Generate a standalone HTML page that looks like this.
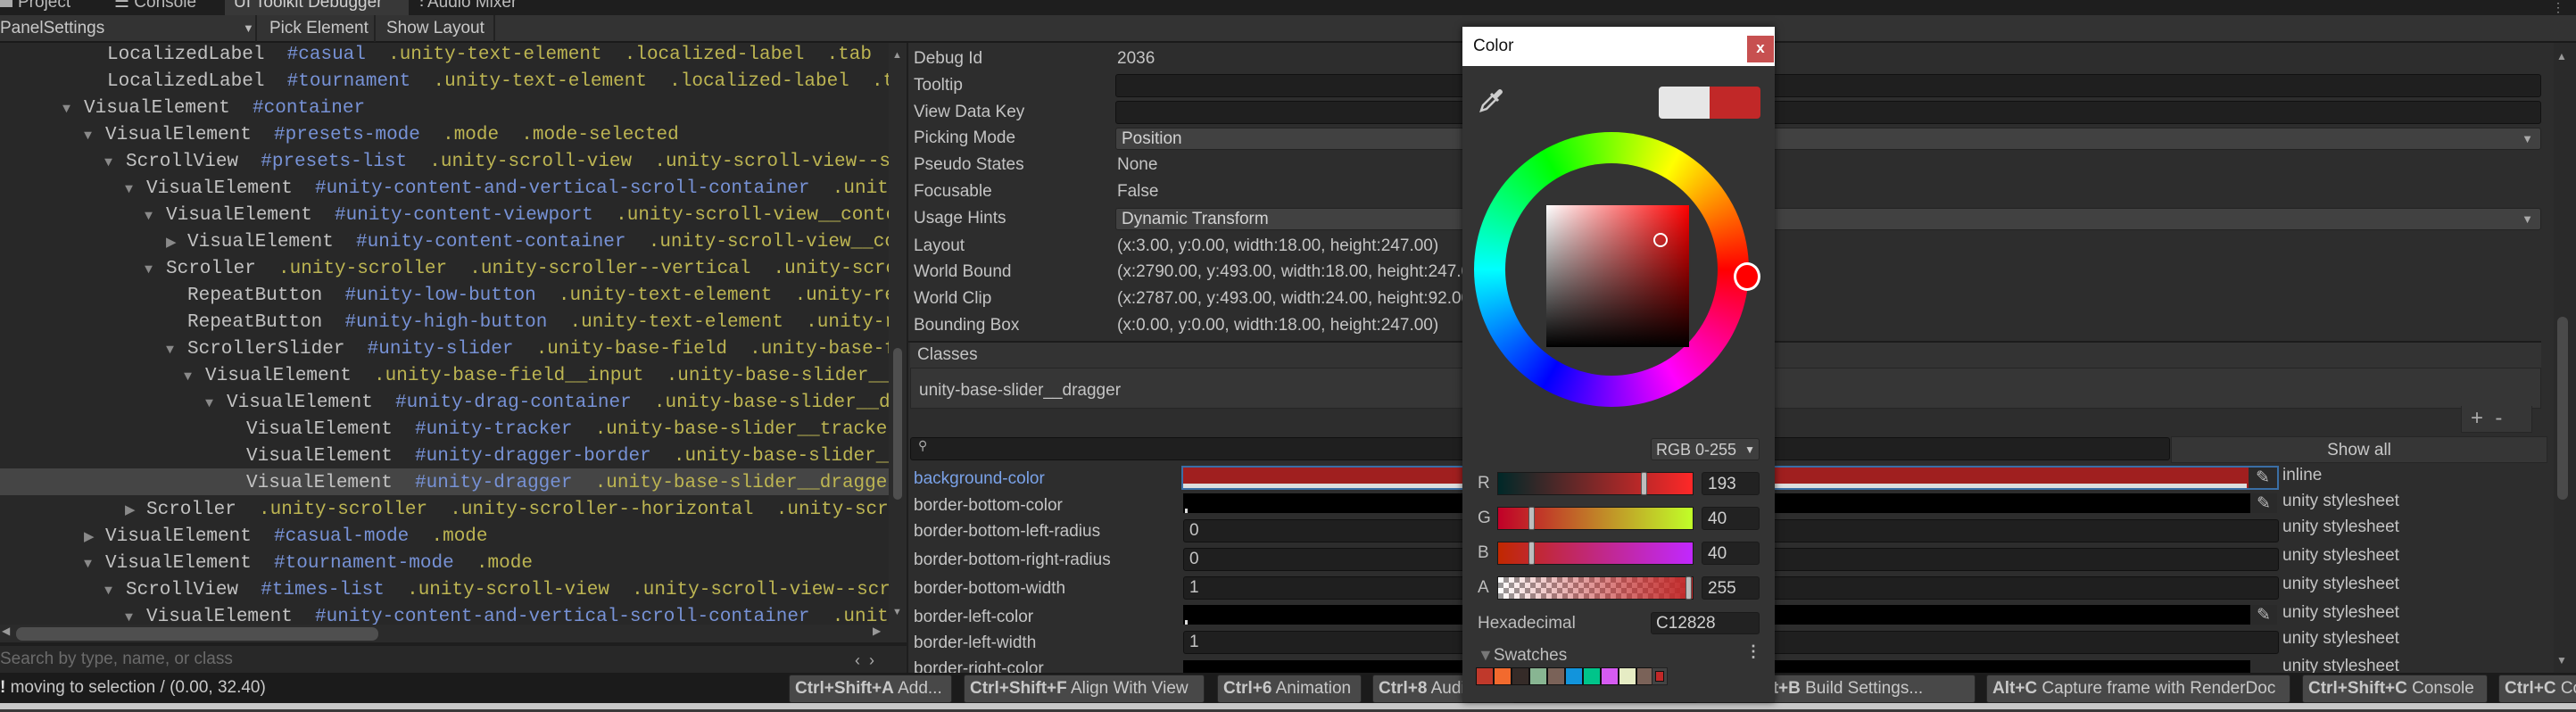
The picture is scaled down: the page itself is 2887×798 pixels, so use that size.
<!DOCTYPE html>
<html><head><meta charset="utf-8">
<style>
*{box-sizing:border-box;margin:0;padding:0}
body{width:2887px;height:798px;overflow:hidden;background:#282828;position:relative;font-family:"Liberation Sans",sans-serif;font-size:19px;color:#c4c4c4}
.a{position:absolute;white-space:nowrap}
.m{font-family:"Liberation Mono",monospace;font-size:21px;line-height:30px;height:30px;white-space:pre}
.n{color:#c2c2c2}.i{color:#7792d6}.c{color:#bdb552}
.tri{color:#8a8a8a;font-size:15px;display:inline-block;width:24px}
.lbl{position:absolute;left:1024px;white-space:nowrap;color:#c4c4c4;line-height:24px}
.fld{position:absolute;background:#1f1f1f;border:1px solid #111;border-radius:3px}
.dd{position:absolute;background:#414141;border:1px solid #232323;border-radius:3px;color:#d2d2d2;padding-left:6px;line-height:24px}
.btn{position:absolute;background:#484848;border:1px solid #252525;border-radius:3px;color:#c8c8c8;line-height:30px;padding:0 6px;white-space:nowrap;font-size:19px}
.sl{position:absolute;left:1678px;width:220px;height:26px;border:1px solid #191919}
.hd{position:absolute;width:7px;height:26px;top:-1px;background:#bdbdbd;border:1px solid #555;border-radius:2px}
.nb{position:absolute;left:1907px;width:65px;height:26px;background:#222;border:1px solid #1a1a1a;border-radius:3px;padding-left:6px;line-height:25px;color:#d0d0d0}
.rl{position:absolute;left:1656px;color:#bdbdbd;line-height:26px}
.sw{position:absolute;top:748px;width:20px;height:20px;border:1px solid #111}
</style></head><body>

<div class="a" style="left:0;top:0;width:2887px;height:17px;background:#1e1e1e"></div>
<div class="a" style="left:252px;top:0;width:206px;height:17px;background:#383838"></div>
<div class="a" style="left:0;top:-8px;font-size:19px;color:#bbb;line-height:22px">
<span style="display:inline-block;width:14px;height:12px;background:#aaa;margin-right:6px"></span>Project</div>
<div class="a" style="left:128px;top:-8px;color:#bbb;line-height:22px">☰ Console</div>
<div class="a" style="left:262px;top:-8px;color:#d0d0d0;line-height:22px">UI Toolkit Debugger</div>
<div class="a" style="left:470px;top:-8px;color:#bbb;line-height:22px">⫶ Audio Mixer</div>
<div class="a" style="left:2860px;top:0;color:#999;font-size:14px">⋮</div>

<div class="a" style="left:0;top:17px;width:2887px;height:30px;background:#333"></div>
<div class="a" style="left:0;top:46px;width:2887px;height:2px;background:#1a1a1a"></div>
<div class="a" style="left:0;top:17px;width:288px;height:30px;border-right:2px solid #222;line-height:30px;color:#c8c8c8">PanelSettings<span style="position:absolute;left:272px;font-size:13px;color:#bbb">▼</span></div>
<div class="a" style="left:290px;top:17px;width:131px;height:30px;border-right:2px solid #222;line-height:30px;padding-left:12px;color:#c8c8c8">Pick Element</div>
<div class="a" style="left:423px;top:17px;width:132px;height:30px;border-right:2px solid #222;line-height:30px;padding-left:10px;color:#c8c8c8">Show Layout</div>

<div class="a" style="left:0;top:48px;width:996px;height:652px;overflow:hidden">
<div class="a" style="left:0;top:477px;width:996px;height:30px;background:#454545"></div>
<div class="a m" style="left:120px;top:-1px"><span class="n">LocalizedLabel</span>  <span class="i">#casual</span>  <span class="c">.unity-text-element  .localized-label  .tab</span></div>
<div class="a m" style="left:120px;top:29px"><span class="n">LocalizedLabel</span>  <span class="i">#tournament</span>  <span class="c">.unity-text-element  .localized-label  .tab</span></div>
<div class="a m" style="left:70px;top:59px"><span class="tri">▼</span><span class="n">VisualElement</span>  <span class="i">#container</span></div>
<div class="a m" style="left:94px;top:89px"><span class="tri">▼</span><span class="n">VisualElement</span>  <span class="i">#presets-mode</span>  <span class="c">.mode  .mode-selected</span></div>
<div class="a m" style="left:117px;top:119px"><span class="tri">▼</span><span class="n">ScrollView</span>  <span class="i">#presets-list</span>  <span class="c">.unity-scroll-view  .unity-scroll-view--scroll</span></div>
<div class="a m" style="left:140px;top:149px"><span class="tri">▼</span><span class="n">VisualElement</span>  <span class="i">#unity-content-and-vertical-scroll-container</span>  <span class="c">.unity</span></div>
<div class="a m" style="left:162px;top:179px"><span class="tri">▼</span><span class="n">VisualElement</span>  <span class="i">#unity-content-viewport</span>  <span class="c">.unity-scroll-view__content</span></div>
<div class="a m" style="left:186px;top:209px"><span class="tri">▶</span><span class="n">VisualElement</span>  <span class="i">#unity-content-container</span>  <span class="c">.unity-scroll-view__content</span></div>
<div class="a m" style="left:162px;top:239px"><span class="tri">▼</span><span class="n">Scroller</span>  <span class="c">.unity-scroller  .unity-scroller--vertical  .unity-scroller</span></div>
<div class="a m" style="left:210px;top:269px"><span class="n">RepeatButton</span>  <span class="i">#unity-low-button</span>  <span class="c">.unity-text-element  .unity-repeat</span></div>
<div class="a m" style="left:210px;top:299px"><span class="n">RepeatButton</span>  <span class="i">#unity-high-button</span>  <span class="c">.unity-text-element  .unity-repeat</span></div>
<div class="a m" style="left:186px;top:329px"><span class="tri">▼</span><span class="n">ScrollerSlider</span>  <span class="i">#unity-slider</span>  <span class="c">.unity-base-field  .unity-base-field</span></div>
<div class="a m" style="left:206px;top:359px"><span class="tri">▼</span><span class="n">VisualElement</span>  <span class="c">.unity-base-field__input  .unity-base-slider__input</span></div>
<div class="a m" style="left:230px;top:389px"><span class="tri">▼</span><span class="n">VisualElement</span>  <span class="i">#unity-drag-container</span>  <span class="c">.unity-base-slider__drag</span></div>
<div class="a m" style="left:276px;top:419px"><span class="n">VisualElement</span>  <span class="i">#unity-tracker</span>  <span class="c">.unity-base-slider__tracker</span></div>
<div class="a m" style="left:276px;top:449px"><span class="n">VisualElement</span>  <span class="i">#unity-dragger-border</span>  <span class="c">.unity-base-slider__drag</span></div>
<div class="a m" style="left:276px;top:479px"><span class="n">VisualElement</span>  <span class="i">#unity-dragger</span>  <span class="c">.unity-base-slider__dragger</span></div>
<div class="a m" style="left:140px;top:509px"><span class="tri">▶</span><span class="n">Scroller</span>  <span class="c">.unity-scroller  .unity-scroller--horizontal  .unity-scroller</span></div>
<div class="a m" style="left:94px;top:539px"><span class="tri">▶</span><span class="n">VisualElement</span>  <span class="i">#casual-mode</span>  <span class="c">.mode</span></div>
<div class="a m" style="left:94px;top:569px"><span class="tri">▼</span><span class="n">VisualElement</span>  <span class="i">#tournament-mode</span>  <span class="c">.mode</span></div>
<div class="a m" style="left:117px;top:599px"><span class="tri">▼</span><span class="n">ScrollView</span>  <span class="i">#times-list</span>  <span class="c">.unity-scroll-view  .unity-scroll-view--scroll</span></div>
<div class="a m" style="left:140px;top:629px"><span class="tri">▼</span><span class="n">VisualElement</span>  <span class="i">#unity-content-and-vertical-scroll-container</span>  <span class="c">.unity</span></div>
</div>
<div class="a" style="left:996px;top:48px;width:20px;height:672px;background:#2b2b2b"></div>
<div class="a" style="left:1001px;top:390px;width:10px;height:170px;background:#4f4f4f;border-radius:5px"></div>
<div class="a" style="left:1000px;top:56px;font-size:11px;color:#999">▲</div>
<div class="a" style="left:1000px;top:680px;font-size:11px;color:#999">▼</div>
<div class="a" style="left:0;top:700px;width:996px;height:20px;background:#2b2b2b"></div>
<div class="a" style="left:18px;top:703px;width:406px;height:15px;background:#4f4f4f;border-radius:7px"></div>
<div class="a" style="left:2px;top:700px;font-size:12px;color:#999">◀</div>
<div class="a" style="left:978px;top:700px;font-size:12px;color:#999">▶</div>
<div class="a" style="left:0;top:720px;width:1016px;height:4px;background:#1e1e1e"></div>
<div class="a" style="left:0;top:724px;width:1016px;height:30px;background:#282828"></div>
<div class="a" style="left:0;top:727px;color:#6b6b6b;line-height:24px">Search by type, name, or class</div>
<div class="a" style="left:950px;top:726px;width:62px;height:28px;color:#aaa;line-height:28px;font-size:18px;padding-left:8px">‹ &nbsp;›</div>

<div class="a" style="left:1016px;top:48px;width:2px;height:706px;background:#1e1e1e"></div>
<div class="a" style="left:1018px;top:48px;width:1844px;height:706px;background:#2d2d2d"></div>
<div class="lbl" style="top:54px">Debug Id</div><div class="a" style="left:1252px;top:54px;line-height:24px">2036</div>
<div class="lbl" style="top:84px">Tooltip</div><div class="fld" style="left:1250px;top:83px;width:1598px;height:26px"></div>
<div class="lbl" style="top:114px">View Data Key</div><div class="fld" style="left:1250px;top:113px;width:1598px;height:26px"></div>
<div class="lbl" style="top:143px">Picking Mode</div><div class="dd" style="left:1250px;top:143px;width:1598px;height:25px">Position<span style="position:absolute;right:8px;font-size:13px;color:#aaa">▼</span></div>
<div class="lbl" style="top:173px">Pseudo States</div><div class="a" style="left:1252px;top:173px;line-height:24px">None</div>
<div class="lbl" style="top:203px">Focusable</div><div class="a" style="left:1252px;top:203px;line-height:24px">False</div>
<div class="lbl" style="top:233px">Usage Hints</div><div class="dd" style="left:1250px;top:233px;width:1598px;height:25px">Dynamic Transform<span style="position:absolute;right:8px;font-size:13px;color:#aaa">▼</span></div>
<div class="lbl" style="top:264px">Layout</div><div class="a" style="left:1252px;top:264px;line-height:24px">(x:3.00, y:0.00, width:18.00, height:247.00)</div>
<div class="lbl" style="top:293px">World Bound</div><div class="a" style="left:1252px;top:293px;line-height:24px">(x:2790.00, y:493.00, width:18.00, height:247.00)</div>
<div class="lbl" style="top:323px">World Clip</div><div class="a" style="left:1252px;top:323px;line-height:24px">(x:2787.00, y:493.00, width:24.00, height:92.00)</div>
<div class="lbl" style="top:353px">Bounding Box</div><div class="a" style="left:1252px;top:353px;line-height:24px">(x:0.00, y:0.00, width:18.00, height:247.00)</div>

<div class="a" style="left:1018px;top:382px;width:1830px;height:2px;background:#1c1c1c"></div>
<div class="a" style="left:1020px;top:384px;width:1828px;height:28px;background:#333"></div>
<div class="a" style="left:1028px;top:385px;line-height:26px;color:#c4c4c4">Classes</div>
<div class="a" style="left:1020px;top:412px;width:1828px;height:46px;background:#363636;border:1px solid #262626"></div>
<div class="a" style="left:1030px;top:425px;line-height:26px;color:#c4c4c4">unity-base-slider__dragger</div>
<div class="a" style="left:2758px;top:455px;width:80px;height:30px;background:#363636;border:1px solid #262626;border-top:none;color:#aaa;font-size:24px;line-height:28px;padding-left:10px">+ &nbsp;-</div>
<div class="fld" style="left:1020px;top:490px;width:1412px;height:26px"><span style="position:absolute;left:8px;top:0;font-size:14px;color:#aaa">⚲</span></div>
<div class="a" style="left:2433px;top:489px;width:422px;height:30px;background:#363636;border:1px solid #262626;text-align:center;line-height:30px;color:#c8c8c8">Show all</div>

<div class="a" style="left:1024px;top:524px;line-height:26px;color:#7aa2e8">background-color</div>
<div class="a" style="left:1324px;top:522px;width:1230px;height:27px;border:2px solid #3a6ea5;background:#a01f1f"><div style="position:absolute;left:0;bottom:0;width:1192px;height:5px;background:#ddd"></div><div style="position:absolute;right:0;top:0;width:32px;height:23px;background:#2a2a2a;color:#bbb;text-align:center">✎</div></div>
<div class="a" style="left:2558px;top:520px;line-height:26px">inline</div>

<div class="lbl" style="top:555px">border-bottom-color</div>
<div class="a" style="left:1326px;top:553px;width:1196px;height:22px;background:#000"><div style="position:absolute;left:2px;bottom:0;width:3px;height:5px;background:#ddd"></div></div>
<div class="a" style="left:2522px;top:553px;width:30px;height:22px;background:#2a2a2a;color:#bbb;text-align:center">✎</div>
<div class="a" style="left:2558px;top:549px;line-height:26px">unity stylesheet</div>

<div class="lbl" style="top:584px">border-bottom-left-radius</div>
<div class="fld" style="left:1326px;top:582px;width:1228px;height:26px;padding-left:6px;line-height:24px">0</div>
<div class="a" style="left:2558px;top:578px;line-height:26px">unity stylesheet</div>

<div class="lbl" style="top:616px">border-bottom-right-radius</div>
<div class="fld" style="left:1326px;top:614px;width:1228px;height:26px;padding-left:6px;line-height:24px">0</div>
<div class="a" style="left:2558px;top:610px;line-height:26px">unity stylesheet</div>

<div class="lbl" style="top:648px">border-bottom-width</div>
<div class="fld" style="left:1326px;top:646px;width:1228px;height:26px;padding-left:6px;line-height:24px">1</div>
<div class="a" style="left:2558px;top:642px;line-height:26px">unity stylesheet</div>

<div class="lbl" style="top:680px">border-left-color</div>
<div class="a" style="left:1326px;top:678px;width:1196px;height:22px;background:#000"><div style="position:absolute;left:2px;bottom:0;width:3px;height:5px;background:#ddd"></div></div>
<div class="a" style="left:2522px;top:678px;width:30px;height:22px;background:#2a2a2a;color:#bbb;text-align:center">✎</div>
<div class="a" style="left:2558px;top:674px;line-height:26px">unity stylesheet</div>

<div class="lbl" style="top:709px">border-left-width</div>
<div class="fld" style="left:1326px;top:707px;width:1228px;height:26px;padding-left:6px;line-height:24px">1</div>
<div class="a" style="left:2558px;top:703px;line-height:26px">unity stylesheet</div>

<div class="a" style="left:1018px;top:738px;width:1844px;height:16px;overflow:hidden">
<div class="lbl" style="left:6px;top:0">border-right-color</div>
<div class="a" style="left:308px;top:2px;width:1196px;height:22px;background:#000"></div>
<div class="a" style="left:1540px;top:-4px;line-height:26px">unity stylesheet</div></div>

<div class="a" style="left:2862px;top:48px;width:25px;height:706px;background:#2a2a2a"></div>
<div class="a" style="left:2866px;top:355px;width:12px;height:205px;background:#4a4a4a;border-radius:6px"></div>
<div class="a" style="left:2865px;top:56px;font-size:12px;color:#999">▲</div>
<div class="a" style="left:2865px;top:733px;font-size:12px;color:#999">▼</div>

<div class="a" style="left:0;top:754px;width:2887px;height:34px;background:#1b1b1b"></div>
<div class="a" style="left:0;top:758px;line-height:26px;color:#c8c8c8"><b style="color:#ddd">!</b> moving to selection / (0.00, 32.40)</div>
<div class="btn" style="left:884px;top:756px;width:183px"><b>Ctrl+Shift+A</b> Add...</div>
<div class="btn" style="left:1080px;top:756px;width:270px"><b>Ctrl+Shift+F</b> Align With View</div>
<div class="btn" style="left:1364px;top:756px;width:162px"><b>Ctrl+6</b> Animation</div>
<div class="btn" style="left:1538px;top:756px;width:160px"><b>Ctrl+8</b> Audio Mixer</div>
<div class="btn" style="left:1900px;top:756px;width:314px"><b>Ctrl+Shift+B</b> Build Settings...</div>
<div class="btn" style="left:2226px;top:756px;width:341px"><b>Alt+C</b> Capture frame with RenderDoc</div>
<div class="btn" style="left:2580px;top:756px;width:208px"><b>Ctrl+Shift+C</b> Console</div>
<div class="btn" style="left:2800px;top:756px;width:120px"><b>Ctrl+C</b> Copy</div>
<div class="a" style="left:0;top:788px;width:2887px;height:10px;background:#c8c8c8"></div>
<div class="a" style="left:0;top:795px;width:2887px;height:3px;background:#3a3a3a"></div>

<div class="a" style="left:1639px;top:30px;width:350px;height:757px;background:#333;box-shadow:0 0 8px rgba(0,0,0,.6)"></div>
<div class="a" style="left:1639px;top:30px;width:350px;height:44px;background:#fff"></div>
<div class="a" style="left:1651px;top:40px;color:#111;line-height:24px">Color</div>
<div class="a" style="left:1958px;top:40px;width:30px;height:30px;background:#c75050;color:#fff;font-weight:bold;text-align:center;line-height:28px;font-size:17px">x</div>
<svg class="a" style="left:1656px;top:96px" width="30" height="32" viewBox="0 0 30 32"><path d="M4 28 L6 22 L17 11 L21 15 L10 26 Z" fill="none" stroke="#ccc" stroke-width="2.5"/><path d="M17 11 L23 5 Q25 3 27 5 Q29 7 27 9 L21 15" fill="#ccc"/><path d="M15 9 L23 17" stroke="#ccc" stroke-width="3"/></svg>
<div class="a" style="left:1859px;top:97px;width:57px;height:36px;background:#e6e6e6;border-radius:4px 0 0 4px"></div>
<div class="a" style="left:1916px;top:97px;width:57px;height:36px;background:#c12828;border-radius:0 4px 4px 0"></div>
<div class="a" style="left:1652px;top:148px;width:308px;height:308px;border-radius:50%;background:conic-gradient(#80ff00 0deg,#ffff00 30deg,#ff8000 60deg,#ff0000 90deg,#ff0080 120deg,#ff00ff 150deg,#8000ff 180deg,#0000ff 210deg,#0080ff 240deg,#00ffff 270deg,#00ff80 300deg,#00ff00 330deg,#80ff00 360deg)"></div>
<div class="a" style="left:1687px;top:183px;width:238px;height:238px;border-radius:50%;background:#333"></div>
<div class="a" style="left:1733px;top:230px;width:160px;height:159px;background:linear-gradient(to top,#000,rgba(0,0,0,0)),linear-gradient(to right,#fff,#f00)"></div>
<div class="a" style="left:1853px;top:261px;width:16px;height:16px;border:2px solid #fff;border-radius:50%"></div>
<div class="a" style="left:1943px;top:294px;width:30px;height:32px;border:3px solid #fff;border-radius:50%;background:#f00"></div>
<div class="a" style="left:1850px;top:491px;width:122px;height:25px;background:#3e3e3e;border:1px solid #262626;border-radius:3px;line-height:24px;padding-left:5px;color:#ccc;font-size:18px;overflow:hidden">RGB 0-255<span style="position:absolute;right:4px;top:0;font-size:12px;background:#3e3e3e">▼</span></div>
<div class="rl" style="top:529px">R</div>
<div class="sl" style="top:529px;background:linear-gradient(to right,#002828,#ff2828)"><div class="hd" style="left:160px"></div></div>
<div class="nb" style="top:529px">193</div>
<div class="rl" style="top:568px">G</div>
<div class="sl" style="top:568px;background:linear-gradient(to right,#c10028,#c1ff28)"><div class="hd" style="left:34px"></div></div>
<div class="nb" style="top:568px">40</div>
<div class="rl" style="top:607px">B</div>
<div class="sl" style="top:607px;background:linear-gradient(to right,#c12800,#c128ff)"><div class="hd" style="left:34px"></div></div>
<div class="nb" style="top:607px">40</div>
<div class="rl" style="top:646px">A</div>
<div class="sl" style="top:646px;background:linear-gradient(to right,rgba(193,40,40,0),#c12828),repeating-conic-gradient(#999 0 25%,#fff 0 50%) 0 0/12px 12px"><div class="hd" style="left:210px"></div></div>
<div class="nb" style="top:646px">255</div>
<div class="a" style="left:1656px;top:686px;line-height:25px;color:#bdbdbd">Hexadecimal</div>
<div class="a" style="left:1850px;top:686px;width:122px;height:25px;background:#222;border:1px solid #1a1a1a;border-radius:3px;line-height:24px;padding-left:5px;color:#d0d0d0">C12828</div>
<div class="a" style="left:1656px;top:722px;line-height:24px;color:#bdbdbd"><span style="font-size:18px;color:#777">▼</span>Swatches</div>
<div class="a" style="left:1956px;top:720px;color:#bbb;font-weight:bold;font-size:18px">⋮</div>
<div class="sw" style="left:1654px;background:#c0392b"></div>
<div class="sw" style="left:1674px;background:#f26a2e"></div>
<div class="sw" style="left:1694px;background:#352b28"></div>
<div class="sw" style="left:1714px;background:#88b592"></div>
<div class="sw" style="left:1734px;background:#7a6258"></div>
<div class="sw" style="left:1754px;background:#1294dc"></div>
<div class="sw" style="left:1774px;background:#00c48a"></div>
<div class="sw" style="left:1794px;background:#d65bf2"></div>
<div class="sw" style="left:1814px;background:#e6ecc4"></div>
<div class="sw" style="left:1834px;background:#7a6258"></div>
<div class="a" style="left:1851px;top:748px;width:18px;height:20px;background:#444;border:1px solid #222"><div style="margin:3px 3px;width:10px;height:12px;background:#c12828;border:1px solid #111"></div></div>
</body></html>
